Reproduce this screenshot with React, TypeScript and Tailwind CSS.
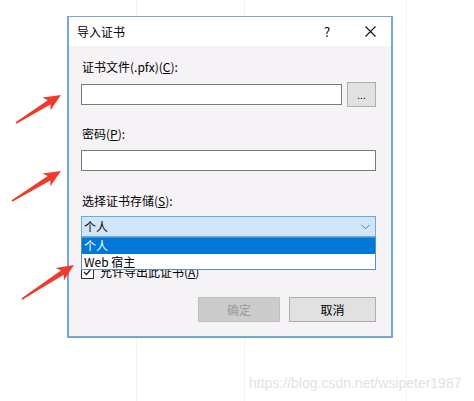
import React from "react";

type Pt = [number, number];

function arrowPoints(tail: Pt, tip: Pt): string {
  const dx = tip[0] - tail[0];
  const dy = tip[1] - tail[1];
  const len = Math.hypot(dx, dy);
  const ux = dx / len;
  const uy = dy / len;
  const nx = -uy;
  const ny = ux;
  const headLen = 17;
  const headHalf = 7.5;
  const baseX = tip[0] - ux * headLen;
  const baseY = tip[1] - uy * headLen;
  const tw = 0.8;
  const sw = 2.6;
  const pts: Pt[] = [
    [tail[0] + nx * tw, tail[1] + ny * tw],
    [baseX + ux * 3 + nx * sw, baseY + uy * 3 + ny * sw],
    [baseX + nx * headHalf, baseY + ny * headHalf],
    [tip[0], tip[1]],
    [baseX - nx * headHalf, baseY - ny * headHalf],
    [baseX + ux * 3 - nx * sw, baseY + uy * 3 - ny * sw],
    [tail[0] - nx * tw, tail[1] - ny * tw],
  ];
  return pts.map((p) => `${p[0].toFixed(1)},${p[1].toFixed(1)}`).join(" ");
}

const arrows: [Pt, Pt][] = [
  [[16, 123], [61, 95]],
  [[12, 201], [61, 171]],
  [[22, 299], [74, 265]],
];

export default function App() {
  return (
    <div className="relative w-[474px] h-[401px] overflow-hidden bg-white pl-[67px] pt-[16px] font-['Noto_Sans_CJK_SC',sans-serif] text-[12px] leading-[16px] text-black">
      {/* faint background lines */}
      <div className="absolute left-[136px] top-0 h-full w-px bg-[#f3f3f3]" />
      <div className="absolute left-[244px] top-0 h-full w-px bg-[#f3f3f3]" />
      <div className="absolute left-[406px] top-0 h-full w-px bg-[#f3f3f3]" />

      {/* dialog */}
      <div className="relative flex h-[322px] w-[326px] flex-col border border-l-2 border-r-2 border-b-2 border-[#74a6d8] bg-[#f6f3f7]">
        {/* title bar */}
        <div className="flex h-[29px] shrink-0 items-center justify-between bg-white pl-[8px] pr-[6px]">
          <span className="text-[12px]">导入证书</span>
          <div className="flex items-center gap-[13px]">
            <span className="w-[30px] text-center text-[13px]">?</span>
            <span className="flex w-[30px] items-center justify-center">
              <svg width="11" height="11" viewBox="0 0 11 11">
                <path d="M0.5 0.5 L10.5 10.5 M10.5 0.5 L0.5 10.5" stroke="#111" strokeWidth="1.1" fill="none" />
              </svg>
            </span>
          </div>
        </div>

        {/* body */}
        <div className="flex flex-1 flex-col pl-[12px] pr-[15px] pt-[13px]">
          <div className="pl-[1px]">
            证书文件(.pfx)(<span className="underline">C</span>):
          </div>
          <div className="mt-[9px] flex h-[21px] items-center gap-[5px]">
            <div className="h-[21px] w-[261px] border border-[#7a7a7a] bg-white" />
            <div className="flex h-[25px] w-[29px] shrink-0 items-center justify-center border border-[#adadad] bg-[#e1e1e1] text-[10px] leading-none">
              ...
            </div>
          </div>

          <div className="mt-[21px] pl-[1px]">
            密码(<span className="underline">P</span>):
          </div>
          <div className="mt-[8px] h-[21px] w-[295px] border border-[#7a7a7a] bg-white" />

          <div className="mt-[22px] pl-[1px]">
            选择证书存储(<span className="underline">S</span>):
          </div>
          <div className="relative mt-[7px] w-[295px]">
            <div className="flex h-[21px] items-center justify-between border border-[#6fa8e0] bg-[#cfe5f8] pl-[2px] pr-[5px]">
              <span>个人</span>
              <svg width="9" height="6" viewBox="0 0 9 6">
                <path d="M0.5 0.8 L4.5 4.8 L8.5 0.8" stroke="#6a7a8a" strokeWidth="1" fill="none" />
              </svg>
            </div>
            <div className="absolute left-0 top-full z-10 flex h-[33px] w-full flex-col border border-[#5a8dc0] bg-white">
              <div className="flex h-[16px] items-center bg-[#0078d7] pl-[2px] text-white">个人</div>
              <div className="flex h-[16px] items-center pl-[2px]">Web 宿主</div>
            </div>
          </div>

          <div className="mt-[27px] flex h-[16px] items-center gap-[6px]">
            <div className="flex h-[13px] w-[13px] items-center justify-center border border-[#333] bg-white">
              <svg width="9" height="8" viewBox="0 0 9 8">
                <path d="M1 4 L3.5 6.5 L8 1" stroke="#222" strokeWidth="1.2" fill="none" />
              </svg>
            </div>
            <span>
              允许导出此证书(<span className="underline">A</span>)
            </span>
          </div>

          <div className="mt-[17px] flex justify-end gap-[9px]">
            <div className="flex h-[25px] w-[82px] items-center justify-center border border-[#bfbfbf] bg-[#cccccc] text-[#9a9a9a]">
              确定
            </div>
            <div className="flex h-[25px] w-[87px] items-center justify-center border border-[#adadad] bg-[#e1e1e1]">
              取消
            </div>
          </div>
        </div>
      </div>

      {/* red arrows */}
      <svg className="pointer-events-none absolute left-0 top-0" width="474" height="401" viewBox="0 0 474 401">
        {arrows.map(([a, b], i) => (
          <polygon key={i} points={arrowPoints(a, b)} fill="#ef3b2d" />
        ))}
      </svg>

      {/* watermark */}
      <div className="absolute left-[249px] top-[375px] font-['Liberation_Sans',sans-serif] text-[14px] leading-[16px] text-[#e2e2e2]">
        https://blog.csdn.net/wsipeter1987
      </div>
    </div>
  );
}
